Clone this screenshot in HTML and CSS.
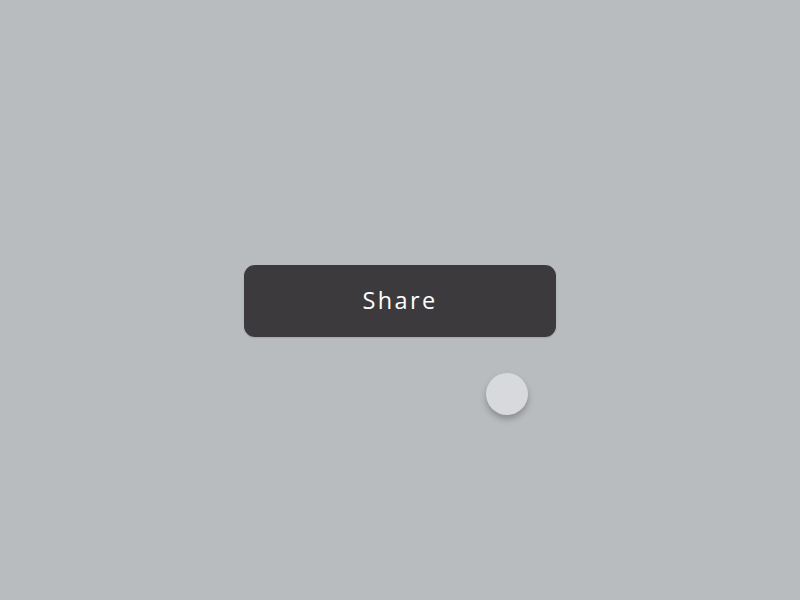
FILE: index.html
```html
<!DOCTYPE html>
<html>
<head>
    <title>Share</title>
    <link rel="stylesheet" href="styles.css">
</head>
<body>
    <div class="stage">
        <button class="share-button">Share</button>
        <div class="cursor"></div>
    </div>
</body>
</html>
```

FILE: styles.css
```css
html, body {
    margin: 0;
    padding: 0;
    height: 100%;
}

body {
    background-color: #b9bcbf;
    font-family: "Open Sans", sans-serif;
    display: flex;
    align-items: center;
    justify-content: center;
}

.stage {
    position: relative;
}

.share-button {
    display: block;
    width: 312px;
    height: 72px;
    margin-top: 2px;
    padding: 0 0 2px 0;
    border: none;
    border-radius: 11px;
    background-color: #3c3a3d;
    color: #fff;
    font-family: "Open Sans", sans-serif;
    font-size: 23.5px;
    font-weight: 500;
    letter-spacing: 2.4px;
    cursor: pointer;
    box-shadow: 0 1px 2px rgba(0, 0, 0, 0.12);
}

/* touch indicator under the button */
.cursor {
    position: absolute;
    left: 242px;
    top: 110px;
    width: 42px;
    height: 42px;
    border-radius: 50%;
    background-color: #d8d9dd;
    box-shadow: 0 4px 6px rgba(0, 0, 0, 0.25);
}
```
